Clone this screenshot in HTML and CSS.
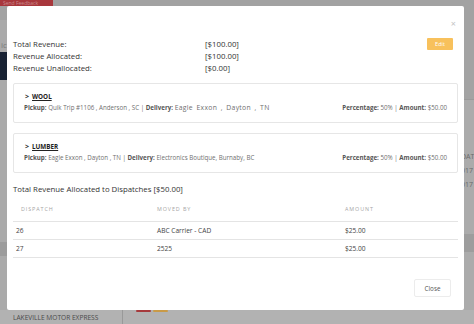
FILE: index.html
```html
<!DOCTYPE html>
<html>
<head>
<meta charset="utf-8">
<link rel="stylesheet" href="styles.css">
</head>
<body>
<div class="page">
  <div class="topbar"><span class="feedback">Send Feedback</span></div>
  <div class="mid">
    <div class="leftcol"><span class="frag">ic</span><div class="navy"></div><div class="lgrey"></div></div>
    <div class="center"></div>
    <div class="rightcol">
      <div class="rtop"></div>
      <div class="rtext">DAT</div>
      <div class="rtext">017</div>
      <div class="rtext">017</div>
      <div class="rband"></div>
    </div>
  </div>
  <div class="bottom">
    <span class="company">LAKEVILLE MOTOR EXPRESS</span>
    <span class="divider"></span>
    <span class="bar red"></span><span class="bar orange"></span>
  </div>
</div>

<div class="modal">
  <div class="modal-header"><span class="x">×</span></div>
  <div class="modal-body">
    <div class="summary">
      <div class="rev">
        <div class="rev-row"><span class="lbl">Total Revenue:</span><span>[$100.00]</span></div>
        <div class="rev-row"><span class="lbl">Revenue Allocated:</span><span>[$100.00]</span></div>
        <div class="rev-row"><span class="lbl">Revenue Unallocated:</span><span>[$0.00]</span></div>
      </div>
      <button class="edit">Edit</button>
    </div>

    <div class="card">
      <div class="title"><span class="chev">&gt;</span><span class="name">WOOL</span></div>
      <div class="details">
        <span><b>Pickup:</b> Quik Trip #1106 , Anderson , SC | <b>Delivery:</b> <span class="wide">Eagle Exxon , Dayton , TN</span></span>
        <span><b>Percentage:</b> 50% | <b>Amount:</b> $50.00</span>
      </div>
    </div>

    <div class="card">
      <div class="title"><span class="chev">&gt;</span><span class="name">LUMBER</span></div>
      <div class="details">
        <span><b>Pickup:</b> Eagle Exxon , Dayton , TN | <b>Delivery:</b> Electronics Boutique, Burnaby, BC</span>
        <span><b>Percentage:</b> 50% | <b>Amount:</b> $50.00</span>
      </div>
    </div>

    <div class="alloc">Total Revenue Allocated to Dispatches [$50.00]</div>

    <div class="table">
      <div class="trow thead"><span>DISPATCH</span><span>MOVED BY</span><span>AMOUNT</span></div>
      <div class="trow"><span>26</span><span>ABC Carrier - CAD</span><span>$25.00</span></div>
      <div class="trow"><span>27</span><span>2525</span><span>$25.00</span></div>
    </div>
  </div>
  <div class="modal-footer"><button class="close">Close</button></div>
</div>
</body>
</html>
```

FILE: styles.css
```css
* { box-sizing: border-box; }
html, body { margin: 0; padding: 0; }
body {
  width: 474px;
  height: 324px;
  overflow: hidden;
  background: #a7a7a7;
  font-family: "Open Sans", "Noto Sans", sans-serif;
  color: #333;
  position: relative;
}

/* underlying page (dimmed) */
.page {
  height: 324px;
  display: flex;
  flex-direction: column;
}
.topbar {
  height: 20px;
  background: #a2a2a2;
  display: flex;
}
.feedback {
  width: 53px;
  height: 6px;
  background: #a8373c;
  color: #c98a8c;
  font-size: 5px;
  line-height: 6px;
  padding-left: 3px;
  overflow: hidden;
}
.mid {
  flex: 1;
  display: flex;
}
.leftcol {
  width: 8px;
  display: flex;
  flex-direction: column;
  background: #aaaaaa;
}
.frag {
  margin-top: 20px;
  font-size: 8px;
  color: #7a7a7a;
  line-height: 10px;
  margin-left: 1px;
}
.navy {
  height: 28px;
  margin-top: 2px;
  background: #182233;
}
.lgrey {
  height: 14px;
  margin-top: 162px;
  background: #9c9c9c;
}
.center { flex: 1; }
.rightcol {
  width: 10px;
  display: flex;
  flex-direction: column;
  background: #ababab;
}
.rtop {
  height: 80px;
  background: #a3a3a3;
  border-bottom: 1px solid #9a9a9a;
  margin-bottom: 50px;
}
.rtext {
  font-size: 7px;
  line-height: 14px;
  color: #6a6a6a;
  white-space: nowrap;
  margin-left: -3px;
  overflow: hidden;
}
.rband {
  height: 18px;
  margin-top: 42px;
  background: #9d9d9d;
}
.bottom {
  height: 14px;
  background: #b2b2b2;
  display: flex;
  align-items: flex-start;
}
.company {
  font-size: 6.6px;
  line-height: 16px;
  color: #4a4a4a;
  margin-left: 13px;
  width: 109px;
  white-space: nowrap;
}
.divider {
  width: 1px;
  height: 14px;
  background: #999;
}
.bar {
  height: 2px;
  width: 15px;
  border-radius: 1px;
}
.bar.red { background: #a63a3c; margin-left: 13px; }
.bar.orange { background: #c99a47; margin-left: 2px; }

/* modal */
.modal {
  position: absolute;
  left: 7px;
  top: 6px;
  width: 457px;
  height: 304px;
  background: #fff;
  border-radius: 2px;
  display: flex;
  flex-direction: column;
}
.modal-header {
  height: 32px;
  display: flex;
  justify-content: flex-end;
  align-items: flex-start;
  padding: 13px 8px 0 0;
}
.x {
  font-size: 9px;
  line-height: 10px;
  color: #c4c4c4;
}
.modal-body {
  padding: 0 6px;
  flex: 1;
}
.summary {
  display: flex;
  justify-content: space-between;
  align-items: flex-start;
}
.rev-row {
  display: flex;
  font-size: 7.8px;
  line-height: 12px;
  color: #333;
}
.lbl { width: 192px; }
.edit {
  margin: 0 5px 0 0;
  width: 26px;
  height: 12px;
  border: none;
  border-radius: 1px;
  background: #f8c15c;
  color: #fff;
  font-family: inherit;
  font-size: 5.5px;
  padding: 0;
}
.card {
  margin-top: 9px;
  border: 1px solid #e6e6e6;
  border-radius: 2px;
  height: 40px;
  padding: 8px 10px 0 10px;
}
.card + .card { margin-top: 10px; }
.title {
  display: flex;
  align-items: center;
  font-size: 6.3px;
  font-weight: 700;
  line-height: 10px;
  color: #222;
  padding-left: 1px;
}
.chev {
  font-size: 7px;
  margin-right: 3px;
}
.name { text-decoration: underline; }
.details {
  display: flex;
  justify-content: space-between;
  font-size: 6.2px;
  line-height: 10px;
  color: #6f6f6f;
  white-space: nowrap;
  margin-top: 1px;
}
.details b { color: #555; font-weight: 700; }
.wide {
  font-size: 6.8px;
  word-spacing: 1.5px;
  letter-spacing: 0.3px;
}
.alloc {
  margin-top: 10px;
  font-size: 7.8px;
  line-height: 12px;
  color: #333;
}
.table {
  margin-top: 3px;
}
.trow {
  display: grid;
  grid-template-columns: 141px 188px 1fr;
  height: 18px;
  align-items: center;
  border-bottom: 1px solid #e4e4e4;
  font-size: 6.6px;
  color: #444;
  padding-left: 3px;
}
.trow.thead {
  height: 24px;
  padding-bottom: 2px;
  font-size: 5.4px;
  letter-spacing: 0.9px;
  color: #a5a5a5;
}
.thead span:first-child { padding-left: 5px; }
.modal-footer {
  display: flex;
  justify-content: flex-end;
  padding: 0 13px 13px 0;
}
.close {
  width: 37px;
  height: 18px;
  background: #fff;
  border: 1px solid #ececec;
  border-radius: 2px;
  font-family: inherit;
  font-size: 6.3px;
  color: #555;
  padding: 0;
}
```
